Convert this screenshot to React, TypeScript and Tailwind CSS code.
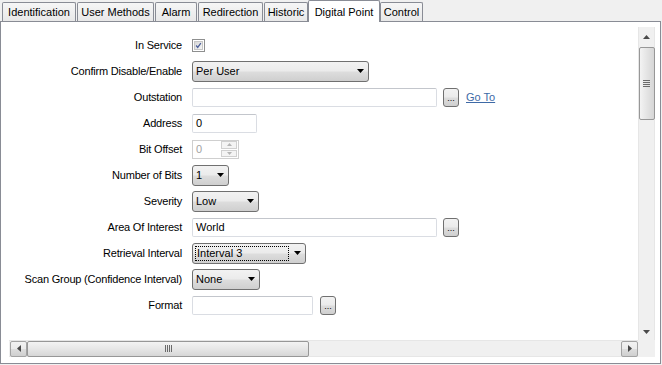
import React from 'react';

type Tab = { label: string; cls: string; active?: boolean };

const tabs: Tab[] = [
  { label: 'Identification', cls: 'w-[74px]' },
  { label: 'User Methods', cls: 'ml-[1px] w-[77px]' },
  { label: 'Alarm', cls: 'ml-[1px] w-[42px]' },
  { label: 'Redirection', cls: 'ml-[1px] w-[65px]' },
  { label: 'Historic', cls: 'ml-[1px] w-[44px]' },
  { label: 'Digital Point', cls: 'w-[72px]', active: true },
  { label: 'Control', cls: 'w-[43px]' },
];

const btnBg = 'bg-[linear-gradient(#f2f2f2,#ebebeb_48%,#dddddd_52%,#cfcfcf)]';

function DownArrow({ color = '#000' }: { color?: string }) {
  return (
    <svg width="7" height="4" viewBox="0 0 7 4" className="shrink-0">
      <path d="M0 0h7L3.5 4z" fill={color} />
    </svg>
  );
}

function Combo({ value, width, focused }: { value: string; width: string; focused?: boolean }) {
  return (
    <div className={`flex h-[21px] ${width} items-center rounded-[3px] border border-[#707070] ${btnBg} pl-[2px] pr-[4px]`}>
      <div
        className={`flex h-[15px] flex-1 items-center pl-[1px] ${
          focused ? 'mr-[5px] border border-dotted border-black' : ''
        }`}
      >
        {value}
      </div>
      <DownArrow />
    </div>
  );
}

function TextBox({ width, value }: { width: string; value?: string }) {
  return (
    <div className={`flex h-[19px] ${width} items-center rounded-[2px] border border-[#dadde3] border-t-[#c3c6cc] bg-white pl-[3px]`}>
      {value}
    </div>
  );
}

function Ellipsis({ className = '' }: { className?: string }) {
  return (
    <div
      className={`flex h-[19px] w-[16px] items-end justify-center rounded-[3px] border border-[#707070] ${btnBg} pb-[3px] text-[9px] leading-none ${className}`}
    >
      ...
    </div>
  );
}

function Spinner() {
  return (
    <div className="flex h-[19px] w-[47px] items-center border border-[#cfcfcf] bg-white pl-[3px] text-[#a3a3a3]">
      <span className="flex-1">0</span>
      <div className="mr-[1px] flex h-[16px] w-[16px] flex-col gap-[1px]">
        <div className="flex flex-1 items-center justify-center border border-[#d0d0d0] bg-[#f4f4f4]">
          <svg width="5" height="3" viewBox="0 0 5 3">
            <path d="M0 3h5L2.5 0z" fill="#b5b5b5" />
          </svg>
        </div>
        <div className="flex flex-1 items-center justify-center border border-[#d0d0d0] bg-[#f4f4f4]">
          <svg width="5" height="3" viewBox="0 0 5 3">
            <path d="M0 0h5L2.5 3z" fill="#b5b5b5" />
          </svg>
        </div>
      </div>
    </div>
  );
}

function CheckBox() {
  return (
    <div className="flex h-[13px] w-[13px] items-center justify-center border border-[#8e8f8f] bg-white p-[1px]">
      <div className="flex h-full w-full items-center justify-center border border-[#c6c6c6] bg-[linear-gradient(135deg,#d8d8d8,#f5f5f5)]">
        <svg width="9" height="9" viewBox="0 0 9 9">
          <path d="M1.5 4.5 L3.5 7 L7.5 1.5" stroke="#4c5f99" strokeWidth="1.6" fill="none" />
        </svg>
      </div>
    </div>
  );
}

function Row({ label, children }: { label: string; children: React.ReactNode }) {
  return (
    <div className="flex h-[26px] items-center">
      <div className="w-[172px] shrink-0 text-right tracking-[-0.2px]">{label}</div>
      <div className="ml-[10px] flex items-center">{children}</div>
    </div>
  );
}

function VScroll() {
  return (
    <div className="flex flex-col items-center border-x border-[#e6e6e6] bg-[#f0f0f0]">
      <div className="flex h-[20px] items-center justify-center">
        <svg width="7" height="4" viewBox="0 0 7 4">
          <path d="M0 4h7L3.5 0z" fill="#4a4a4a" />
        </svg>
      </div>
      <div className="flex h-[73px] w-[16px] items-center justify-center rounded-[2px] border border-[#979797] bg-[linear-gradient(to_right,#f3f3f3,#e4e4e4_50%,#d6d6d6)]">
        <div className="flex w-[7px] flex-col gap-[1px]">
          <div className="h-[1px] bg-[#6a6a6a]" />
          <div className="h-[1px] bg-[#6a6a6a]" />
          <div className="h-[1px] bg-[#6a6a6a]" />
          <div className="h-[1px] bg-[#6a6a6a]" />
        </div>
      </div>
      <div className="flex-1" />
      <div className="flex h-[17px] items-center justify-center">
        <DownArrow color="#4a4a4a" />
      </div>
    </div>
  );
}

function HScroll() {
  return (
    <div className="flex items-center border-y border-[#e6e6e6] bg-[#f0f0f0] pl-[1px]">
      <div className={`flex h-[16px] w-[17px] items-center justify-center rounded-[2px] border border-[#a3a3a3] ${btnBg}`}>
        <svg width="4" height="7" viewBox="0 0 4 7">
          <path d="M4 0v7L0 3.5z" fill="#4a4a4a" />
        </svg>
      </div>
      <div className="flex h-[16px] w-[282px] items-center justify-center rounded-[2px] border border-[#979797] bg-[linear-gradient(#f3f3f3,#e6e6e6_50%,#d6d6d6)]">
        <div className="flex h-[7px] gap-[1px]">
          <div className="w-[1px] bg-[#6a6a6a]" />
          <div className="w-[1px] bg-[#6a6a6a]" />
          <div className="w-[1px] bg-[#6a6a6a]" />
          <div className="w-[1px] bg-[#6a6a6a]" />
        </div>
      </div>
      <div className="flex-1" />
      <div className={`flex h-[16px] w-[17px] items-center justify-center rounded-[2px] border border-[#a3a3a3] ${btnBg}`}>
        <svg width="4" height="7" viewBox="0 0 4 7">
          <path d="M0 0v7L4 3.5z" fill="#4a4a4a" />
        </svg>
      </div>
    </div>
  );
}

export default function App() {
  return (
    <div className="h-[365px] w-[662px] overflow-hidden bg-[#f0f0f0] font-['Liberation_Sans',Arial,sans-serif] text-[11px] text-black">
      {/* Tab strip */}
      <div className="flex h-[21px] items-end pl-[2px]">
        {tabs.map((tab) =>
          tab.active ? (
            <div
              key={tab.label}
              className={`relative z-10 -mb-[1px] flex h-[22px] ${tab.cls} items-start justify-center rounded-t-[2px] border border-b-0 border-[#898c95] bg-white pt-[3px]`}
            >
              {tab.label}
            </div>
          ) : (
            <div
              key={tab.label}
              className={`flex h-[19px] ${tab.cls} items-center justify-center rounded-t-[2px] border border-b-0 border-[#898c95] bg-[linear-gradient(#f6f6f6,#e8e8e8)] pt-[1px]`}
            >
              {tab.label}
            </div>
          )
        )}
      </div>

      {/* Panel */}
      <div className="h-[343px] w-[661px] border border-[#898c95] bg-white pt-[5px] pr-[5px] pb-[6px] pl-[8px]">
        <div className="grid h-full grid-cols-[1fr_17px] grid-rows-[1fr_17px]">
          <div className="overflow-hidden pt-[5px] pl-[1px]">
            <Row label="In Service">
              <CheckBox />
            </Row>
            <Row label="Confirm Disable/Enable">
              <Combo value="Per User" width="w-[177px]" />
            </Row>
            <Row label="Outstation">
              <TextBox width="w-[245px]" />
              <Ellipsis className="ml-[6px]" />
              <span className="ml-[7px] text-[#3e6aa6] underline">Go To</span>
            </Row>
            <Row label="Address">
              <TextBox width="w-[65px]" value="0" />
            </Row>
            <Row label="Bit Offset">
              <Spinner />
            </Row>
            <Row label="Number of Bits">
              <Combo value="1" width="w-[37px]" />
            </Row>
            <Row label="Severity">
              <Combo value="Low" width="w-[67px]" />
            </Row>
            <Row label="Area Of Interest">
              <TextBox width="w-[245px]" value="World" />
              <Ellipsis className="ml-[6px]" />
            </Row>
            <Row label="Retrieval Interval">
              <Combo value="Interval 3" width="w-[114px]" focused />
            </Row>
            <Row label="Scan Group (Confidence Interval)">
              <Combo value="None" width="w-[68px]" />
            </Row>
            <Row label="Format">
              <TextBox width="w-[121px]" />
              <Ellipsis className="ml-[7px]" />
            </Row>
          </div>
          <VScroll />
          <HScroll />
          <div className="bg-[#f0f0f0]" />
        </div>
      </div>
    </div>
  );
}
